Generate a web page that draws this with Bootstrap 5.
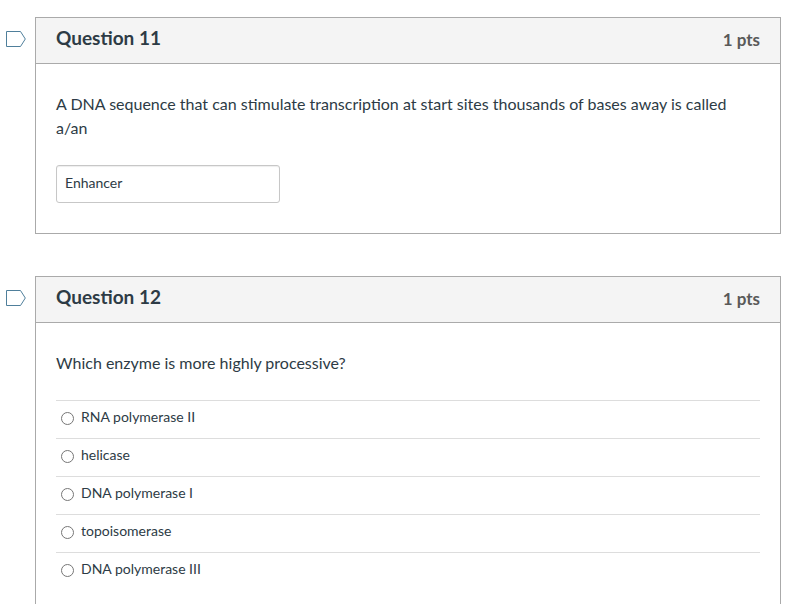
<!DOCTYPE html>
<html lang="en">
<head>
<meta charset="utf-8">
<meta name="viewport" content="width=device-width, initial-scale=1">
<title>Quiz</title>
<link href="https://cdn.jsdelivr.net/npm/bootstrap@5.3.0/dist/css/bootstrap.min.css" rel="stylesheet">
<style>
body{font-family:Lato,"Liberation Sans",sans-serif;font-size:16px;line-height:24px;color:#2d3b45;background:#fff;overflow-x:hidden}
.quiz{padding:17px 19px 0 6px}
.question{margin-bottom:42px}
.flag{width:20px;margin:14px 9px 0 0;line-height:0}
.question-box{border:1px solid #aaa;min-width:0}
.question-head{background:#f4f4f4;border-bottom:1px solid #aaa;padding:0 20px 2px;height:46px}
.question-title{font-size:19px;line-height:24px;font-weight:700;padding-bottom:3px}
.points{font-size:17px;font-weight:700;color:#595959}
.question-body{padding:28px 20px 30px}
.prompt{margin-bottom:25px}
.answer-text{width:224px;height:38px;font-size:14px;color:#2d3b45;border-color:#c7c7c7;border-radius:3px;padding:0 8px 3px;box-shadow:inset 0 1px 1px #eee}
.answer{border-top:1px solid #ddd;height:38px;padding:0 0 2px 5px;font-size:14px}
.answer input{width:13px;height:13px;margin:0 7px 0 0}
.answer label{line-height:20px;padding-bottom:4px}
</style>
<script src="https://cdn.jsdelivr.net/npm/bootstrap@5.3.0/dist/js/bootstrap.bundle.min.js" defer></script>
</head>
<body>
<main class="quiz">
<section class="question d-flex align-items-start">
<button type="button" class="flag btn p-0 border-0 rounded-0 flex-shrink-0" aria-label="Flag question 11"><svg width="20" height="16" viewBox="0 0 20 16" fill="#fff" stroke="#4f7f9b"><path d="M.5 .5H14.5L19.3 8L14.5 15.5H.5Z"/></svg></button>
<div class="question-box flex-grow-1">
<header class="question-head d-flex justify-content-between align-items-center"><h2 class="question-title m-0">Question 11</h2><span class="points">1 pts</span></header>
<div class="question-body">
<label for="blank" class="prompt d-block">A DNA sequence that can stimulate transcription at start sites thousands of bases away is called a/an</label>
<input id="blank" type="text" class="form-control answer-text" value="Enhancer">
</div>
</div>
</section>
<section class="question d-flex align-items-start">
<button type="button" class="flag btn p-0 border-0 rounded-0 flex-shrink-0" aria-label="Flag question 12"><svg width="20" height="16" viewBox="0 0 20 16" fill="#fff" stroke="#4f7f9b"><path d="M.5 .5H14.5L19.3 8L14.5 15.5H.5Z"/></svg></button>
<div class="question-box flex-grow-1">
<header class="question-head d-flex justify-content-between align-items-center"><h2 class="question-title m-0">Question 12</h2><span class="points">1 pts</span></header>
<div class="question-body">
<p class="prompt" id="q12">Which enzyme is more highly processive?</p>
<div role="radiogroup" aria-labelledby="q12">
<div class="answer d-flex align-items-center"><input type="radio" name="enzyme" id="a1"><label for="a1">RNA polymerase II</label></div>
<div class="answer d-flex align-items-center"><input type="radio" name="enzyme" id="a2"><label for="a2">helicase</label></div>
<div class="answer d-flex align-items-center"><input type="radio" name="enzyme" id="a3"><label for="a3">DNA polymerase I</label></div>
<div class="answer d-flex align-items-center"><input type="radio" name="enzyme" id="a4"><label for="a4">topoisomerase</label></div>
<div class="answer d-flex align-items-center"><input type="radio" name="enzyme" id="a5"><label for="a5">DNA polymerase III</label></div>
</div>
</div>
</div>
</section>
</main>
</body>
</html>
